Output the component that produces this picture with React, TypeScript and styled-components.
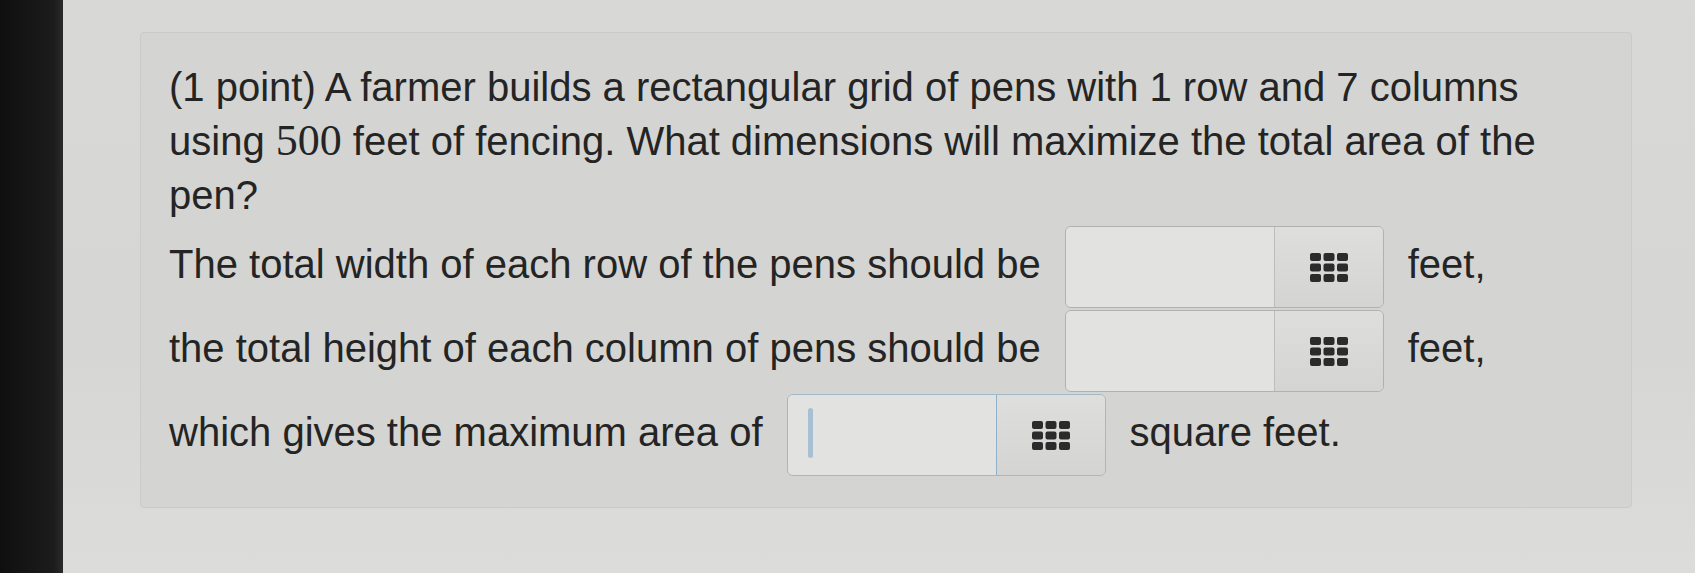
import React from "react";
import styled, { createGlobalStyle } from "styled-components";

const GlobalStyle = createGlobalStyle`
  html, body {
    margin: 0;
    padding: 0;
    background: #d9d9d7;
  }
  * {
    box-sizing: border-box;
  }
`;

const Screen = styled.div`
  display: flex;
  width: 1695px;
  height: 573px;
  overflow: hidden;
`;

const Bezel = styled.div`
  width: 63px;
  flex-shrink: 0;
  background: linear-gradient(90deg, #0f0f0f 0%, #1c1c1c 85%, #2a2a2a 100%);
`;

const Page = styled.div`
  flex: 1;
  padding: 32px 0 0 77px;
  background: linear-gradient(180deg, #d8d8d6 0%, #d6d6d4 60%, #dcdcda 100%);
`;

const Card = styled.div`
  width: 1492px;
  height: 476px;
  padding: 27px 28px;
  background: #d4d4d2;
  border: 1px solid #cacac8;
  border-radius: 4px;
  font-family: "Liberation Sans", Arial, sans-serif;
  font-size: 40px;
  line-height: 54px;
  color: #242424;
`;

const Question = styled.p`
  margin: 0 0 3px 0;
`;

const MathNum = styled.span`
  font-family: "Liberation Serif", "Times New Roman", serif;
  font-size: 44px;
  line-height: 1;
`;

const AnswerRow = styled.div`
  display: flex;
  align-items: center;
  gap: 24px;
  height: 84px;
`;

const Label = styled.span`
  padding-bottom: 6px;
`;

const InputGroup = styled.div<{ $focused?: boolean }>`
  display: flex;
  height: 82px;
  border: 1px solid ${(p) => (p.$focused ? "#a3b9c8" : "#b1b1af")};
  border-radius: 6px;
  overflow: hidden;
`;

const Field = styled.div<{ $focused?: boolean }>`
  position: relative;
  width: 209px;
  background: #e2e2e0;
  border-right: 1px solid ${(p) => (p.$focused ? "#8fb0c6" : "#bdbdbb")};
`;

const Caret = styled.span`
  position: absolute;
  left: 20px;
  top: 13px;
  width: 5px;
  height: 50px;
  border-radius: 3px;
  background: #a9c0d4;
`;

const PaletteButton = styled.div`
  width: 108px;
  display: flex;
  align-items: center;
  justify-content: center;
  background: linear-gradient(180deg, #dededc 0%, #d4d4d2 100%);
`;

const Unit = styled.span`
  white-space: nowrap;
  padding-bottom: 6px;
`;

const GridIcon = () => (
  <svg width="38" height="29" viewBox="0 0 38 29">
    {[0, 1, 2].map((r) =>
      [0, 1, 2].map((c) => (
        <rect
          key={`${r}-${c}`}
          x={c * 13.5}
          y={r * 10.5}
          width="11"
          height="8"
          rx="2"
          fill="#2b2b2b"
        />
      ))
    )}
  </svg>
);

interface AnswerProps {
  label: string;
  unit: string;
  focused?: boolean;
}

const Answer = (props: AnswerProps) => {
  return (
    <AnswerRow>
      <Label>{props.label}</Label>
      <InputGroup $focused={props.focused}>
        <Field $focused={props.focused}>{props.focused && <Caret />}</Field>
        <PaletteButton>
          <GridIcon />
        </PaletteButton>
      </InputGroup>
      <Unit>{props.unit}</Unit>
    </AnswerRow>
  );
};

const App = () => {
  return (
    <>
      <GlobalStyle />
      <Screen>
        <Bezel />
        <Page>
          <Card>
            <Question>
              (1 point) A farmer builds a rectangular grid of pens with 1 row and 7 columns using{" "}
              <MathNum>500</MathNum> feet of fencing. What dimensions will maximize the total area
              of the pen?
            </Question>
            <Answer label="The total width of each row of the pens should be" unit="feet," />
            <Answer label="the total height of each column of pens should be" unit="feet," />
            <Answer label="which gives the maximum area of" unit="square feet." focused />
          </Card>
        </Page>
      </Screen>
    </>
  );
};

export default App;
